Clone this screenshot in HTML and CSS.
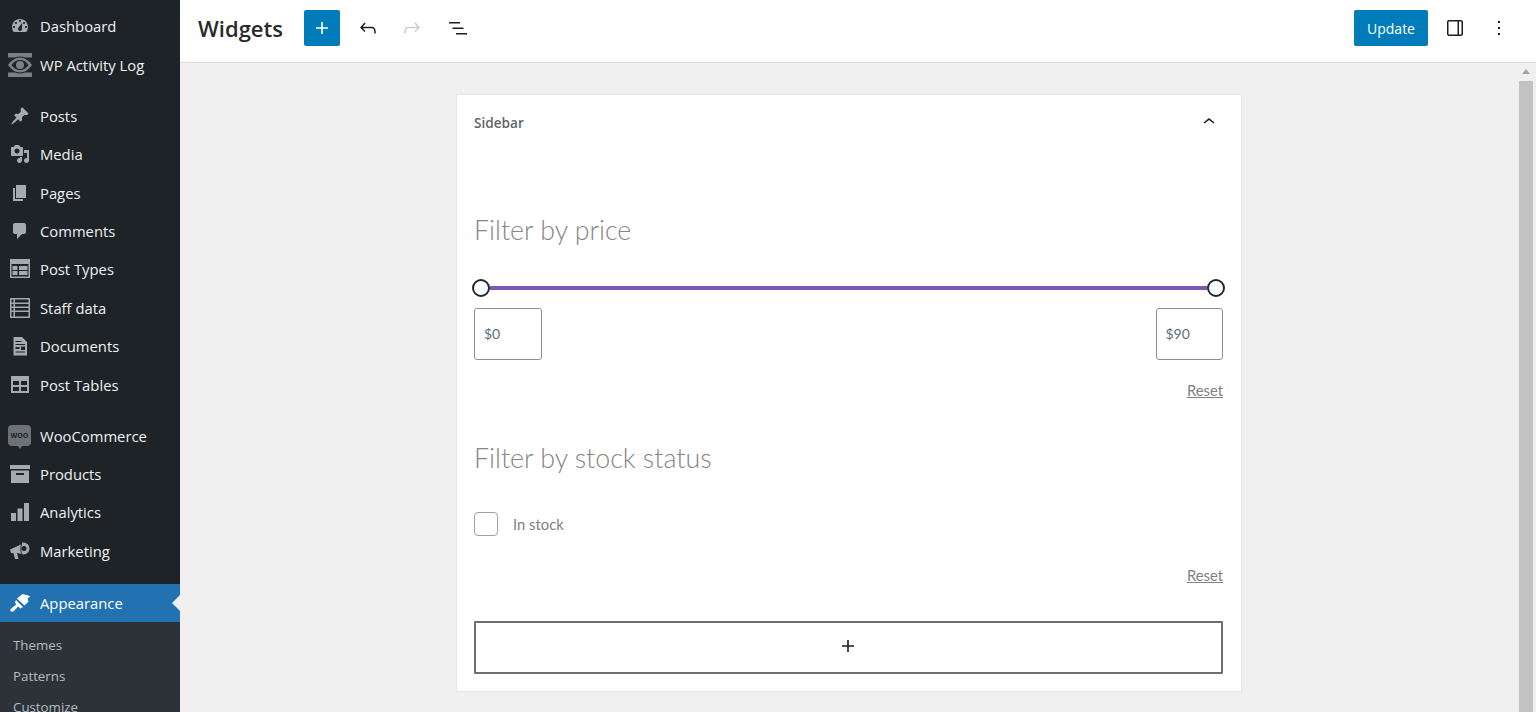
FILE: index.html
```html
<!DOCTYPE html>
<html lang="en">
<head>
<meta charset="utf-8">
<title>Widgets</title>
<link rel="stylesheet" href="styles.css">
</head>
<body>
<div class="app">
  <nav class="side">
    <ul class="group">
      <li class="item"><svg class="ic" viewBox="0 0 20 20"><path d="M3.76 16h12.48c1.100-1.370 1.760-3.110 1.760-5 0-4.420-3.580-8-8-8s-8 3.580-8 8c0 1.890.66 3.630 1.760 5zM10 4c.55 0 1 .45 1 1s-.45 1-1 1-1-.45-1-1 .45-1 1-1zM6 6c.55 0 1 .45 1 1s-.45 1-1 1-1-.45-1-1 .45-1 1-1zm8 0c.55 0 1 .45 1 1s-.45 1-1 1-1-.45-1-1 .45-1 1-1zm-5.370 5.550L12 7v6c0 1.100-.9 2-2 2s-2-.9-2-2c0-.57.24-1.080.63-1.450zM4 10c.55 0 1 .45 1 1s-.45 1-1 1-1-.45-1-1 .45-1 1-1zm12 0c.55 0 1 .45 1 1s-.45 1-1 1-1-.45-1-1 .45-1 1-1z"/></svg>Dashboard</li>
      <li class="item"><svg class="ic ic-wide" viewBox="0 0 24 24"><path class="dim" d="M0 0h24v4.500H17Q12 2.500 7 4.500H0zM0 24h24v-4.500H17Q12 21.500 7 19.500H0z"/><path class="dim" fill-rule="evenodd" d="M0 12Q5 4.500 12 4.500T24 12Q19 19.500 12 19.500T0 12zM3.500 12Q7 17 12 17t8.500-5Q17 7 12 7t-8.500 5z"/><circle class="dim" cx="12" cy="12" r="4"/></svg>WP Activity Log</li>
    </ul>
    <ul class="group">
      <li class="item"><svg class="ic" viewBox="0 0 20 20"><path d="M10.440 3.020l1.820-1.820 6.360 6.350-1.830 1.820c-1.050-.68-2.480-.57-3.410.36l-.75.75c-.92.93-1.040 2.350-.35 3.410l-1.830 1.820-2.410-2.410-2.800 2.790c-.42.42-3.380 2.710-3.800 2.290s1.860-3.390 2.280-3.810l2.790-2.790L4.100 9.360l1.830-1.820c1.050.69 2.480.57 3.400-.36l.75-.75c.93-.92 1.050-2.350.36-3.410z"/></svg>Posts</li>
      <li class="item"><svg class="ic" viewBox="0 0 20 20"><path d="M13 11V4c0-.55-.45-1-1-1h-1.670L9 1H5L3.670 3H2c-.55 0-1 .45-1 1v7c0 .55.45 1 1 1h10c.55 0 1-.45 1-1zM7 4.500c1.380 0 2.500 1.120 2.500 2.500S8.380 9.500 7 9.500 4.500 8.380 4.500 7 5.620 4.500 7 4.500zM14 6h5v10.500c0 1.380-1.120 2.500-2.500 2.500S14 17.880 14 16.500s1.120-2.500 2.500-2.500c.17 0 .34.020.5.050V9h-3V6zm-4 8.050V13h2v3.500c0 1.380-1.120 2.500-2.500 2.500S7 17.880 7 16.500 8.120 14 9.500 14c.17 0 .34.020.5.050z"/></svg>Media</li>
      <li class="item"><svg class="ic" viewBox="0 0 20 20"><path d="M6 15V2h10v13H6zm-1 1h8v2H3V5h2v11z"/></svg>Pages</li>
      <li class="item"><svg class="ic" viewBox="0 0 20 20"><path d="M5 2h9c1.100 0 2 .9 2 2v7c0 1.100-.9 2-2 2h-2l-5 5v-5H5c-1.100 0-2-.9-2-2V4c0-1.100.9-2 2-2z"/></svg>Comments</li>
      <li class="item"><svg class="ic" viewBox="0 0 20 20"><path fill-rule="evenodd" d="M0 0h20v19H0zM1.500 5v12.500h17V5zM2.500 7h5v4h-5zM2.500 12h5v4h-5zM9 7h8.500v4H9zM9 12h8.500v4H9z"/></svg>Post Types</li>
      <li class="item"><svg class="ic" viewBox="0 0 20 20"><path fill-rule="evenodd" d="M0 0h20v20H0zM1.500 1.500v3h2v-3zM1.500 6v2.500h2V6zM1.500 10v2.500h2V10zM1.500 14v4.500h2V14zM5 1.500v3h13.500v-3zM5 6v2.500h13.500V6zM5 10v2.500h13.500V10zM5 14v4.500h13.500V14z"/></svg>Staff data</li>
      <li class="item"><svg class="ic" viewBox="0 0 20 20"><path fill-rule="evenodd" d="M3.500 1H12l5 5v13.500H3.500zM5.500 5v1h6V5zM5.500 8v1h9.500V8zM5.500 11v2h4v-2zM11 10.500V14h4v-3.500zM5.500 15.500v1H15v-1z"/></svg>Documents</li>
      <li class="item"><svg class="ic" viewBox="0 0 20 20"><path fill-rule="evenodd" d="M1 1h18v17H1zM3 6v4h6V6zM11 6v4h6V6zM3 12v4h6v-4zM11 12v4h6v-4z"/></svg>Post Tables</li>
    </ul>
    <ul class="group">
      <li class="item"><span class="woo">WOO</span>WooCommerce</li>
      <li class="item"><svg class="ic" viewBox="0 0 20 20"><path fill-rule="evenodd" d="M0 1h20v4H0zM1 6.500h18V19H1zM6 9v2h8V9z"/></svg>Products</li>
      <li class="item"><svg class="ic" viewBox="0 0 20 20"><path d="M1 11h5v8H1zM7.500 6.500h5V19h-5zM14 1h5v18h-5z"/></svg>Analytics</li>
      <li class="item"><svg class="ic" viewBox="0 0 20 20"><path fill-rule="evenodd" d="M0 8.500L11 3.500Q9.500 9 11.500 13L7 12l1.500 6H5L3.500 12.300 1 12zM13.500 1.500a6 6 0 1 1 0 12 6 6 0 0 1-1-.1Q10 9 12.300 1.600zM14 5a2.500 2.500 0 1 0 0 5 2.500 2.500 0 0 0 0-5z"/></svg>Marketing</li>
    </ul>
    <ul class="group group-current">
      <li class="item current"><svg class="ic" viewBox="0 0 20 20"><path d="M7 5.500L12.500 1 20.500 3 17.500 5.500 18.500 8.500 14.500 12.500zM6 7l7 7-2.500 1.500-2.500-2-4 4.500c-1 1-3 1-3.500-.2-.4-1.200.3-2 1-2.600l4.800-3.700-1.500-2z"/></svg>Appearance</li>
    </ul>
    <ul class="submenu">
      <li>Themes</li>
      <li>Patterns</li>
      <li>Customize</li>
    </ul>
  </nav>
  <div class="work">
    <header class="bar">
      <h1 class="title">Widgets</h1>
      <button class="add" type="button"><svg viewBox="0 0 24 24"><path d="M18 11.200h-5.200V6h-1.600v5.200H6v1.600h5.200V18h1.600v-5.200H18z"/></svg></button>
      <svg class="tool undo" viewBox="0 0 24 24"><path d="M18.300 11.700c-.6-.6-1.400-.9-2.300-.9H6.700l2.900-3.300-1.100-1-4.500 5L8.500 16l1-1-2.700-2.700H16c.5 0 .9.200 1.300.5 1 1 1 3.400 1 4.500v.3h1.500v-.2c0-1.500 0-4.300-1.500-5.700z"/></svg>
      <svg class="tool redo" viewBox="0 0 24 24"><path d="M15.600 6.500l-1.100 1 2.900 3.300H8c-.9 0-1.700.3-2.300.9-1.400 1.500-1.400 4.200-1.400 5.600v.2h1.500v-.3c0-1.100 0-3.500 1-4.500.3-.3.700-.5 1.300-.5h9.200L14.500 15l1.100 1.100 4.600-4.600-4.600-5z"/></svg>
      <svg class="tool list" viewBox="0 0 24 24"><path d="M3 6h11v1.500H3V6zm3.500 5.500h11V13h-11v-1.500zM21 17H10v1.500h11V17z"/></svg>
      <button class="update" type="button">Update</button>
      <svg class="tool panel" viewBox="0 0 24 24"><path d="M18 4H6c-1.100 0-2 .9-2 2v12c0 1.100.9 2 2 2h12c1.100 0 2-.9 2-2V6c0-1.100-.9-2-2-2zM6 5.500h8.500v13H6c-.3 0-.5-.2-.5-.5V6c0-.3.2-.5.5-.5zm12.500 12.500c0 .3-.2.500-.5.500h-2v-13h2c.3 0 .5.200.5.500v12z"/></svg>
      <svg class="tool more" viewBox="0 0 24 24"><path d="M13 19h-2v-2h2v2zm0-6h-2v-2h2v2zm0-6h-2V5h2v2z"/></svg>
    </header>
    <div class="below">
      <main class="editor">
        <section class="card">
          <div class="card-head">
            <span class="card-name">Sidebar</span>
            <svg class="chev" viewBox="0 0 24 24"><path d="M6.500 12.400L12 8l5.500 4.400-.9 1.200L12 10l-4.500 3.600-1-1.200z"/></svg>
          </div>
          <h2 class="widget-title price-title">Filter by price</h2>
          <div class="slider"><span class="thumb"></span><span class="track"></span><span class="thumb"></span></div>
          <div class="prices"><div class="price">$0</div><div class="price">$90</div></div>
          <a class="reset">Reset</a>
          <h2 class="widget-title stock-title">Filter by stock status</h2>
          <label class="stock"><span class="check"></span><span class="stock-label">In stock</span></label>
          <a class="reset reset-two">Reset</a>
          <div class="appender"><svg viewBox="0 0 24 24"><path d="M18 11.200h-5.200V6h-1.600v5.200H6v1.600h5.200V18h1.600v-5.200H18z"/></svg></div>
        </section>
      </main>
      <div class="scroll"><span class="arrow"></span><span class="knob"></span></div>
    </div>
  </div>
</div>
</body>
</html>
```
FILE: styles.css
```css
* { box-sizing: border-box; }
html, body { margin: 0; height: 712px; overflow: hidden; }
body { font-family: "Open Sans", "Noto Sans", sans-serif; background: #f0f0f0; color: #1e1e1e; }
ul { list-style: none; margin: 0; padding: 0; }
.app { display: flex; height: 712px; }

.side { width: 180px; flex: none; background: #1d2327; padding-top: 7px; overflow: hidden; display: flex; flex-direction: column; }
.side > ul { flex: none; }
.group { margin-bottom: 12.800px; }
.group-current { margin: 1px 0 0; }
.item { position: relative; height: 38.400px; display: flex; align-items: center; color: #f0f0f1; font-size: 14.800px; padding-left: 10px; gap: 10px; }
.ic { width: 20px; height: 20px; fill: #a7aaad; flex: none; }
.ic-wide { width: 24px; height: 24px; margin: 0 -2px 0 -2px; }
.dim { fill: #7d8082; }
.woo { position: relative; width: 23px; height: 21px; margin: 0 -1px 0 -2px; border-radius: 4px; background: #6f7275; color: #1d2327; font-size: 7px; font-weight: 700; display: flex; align-items: center; justify-content: center; flex: none; }
.woo::after { content: ""; position: absolute; left: 10px; bottom: -3px; border: 2px solid transparent; border-top: 3px solid #6f7275; border-bottom: 0; }
.current { background: #2271b1; color: #fff; }
.current .ic { fill: #fff; }
.current::after { content: ""; position: absolute; right: 0; top: 11px; border: 8px solid transparent; border-right-color: #f0f0f1; border-left-width: 0; }
.submenu { background: #2c3338; padding-top: 7.500px; height: 200px; }
.submenu li { height: 31px; display: flex; align-items: center; padding-left: 13px; color: rgba(240, 246, 252, .7); font-size: 13.300px; }

.work { flex: 1; min-width: 0; display: flex; flex-direction: column; }
.bar { height: 63px; flex: none; background: #fff; border-bottom: 1px solid #dcdcde; display: flex; align-items: center; padding: 0 18px 6px 18px; }
.title { margin: 0; width: 106px; font-size: 22px; font-weight: 600; line-height: 1; color: #2a2a2a; }
.add { width: 36px; height: 36px; padding: 6px; border: 0; border-radius: 2px; background: #007cba; flex: none; }
.add svg { display: block; width: 24px; height: 24px; fill: #fff; }
.tool { width: 24px; height: 24px; fill: #1e1e1e; flex: none; }
.undo { margin-left: 16px; }
.redo { margin-left: 20px; fill: #ccc; }
.list { margin-left: 22px; }
.update { margin-left: auto; width: 74px; height: 36px; border: 0; border-radius: 2px; background: #007cba; color: #fff; font: 14px "Open Sans", sans-serif; padding: 0; }
.panel { margin-left: 15px; }
.more { margin-left: 20px; margin-right: 7px; }

.below { flex: 1; min-height: 0; display: flex; }
.editor { flex: 1; min-width: 0; padding-top: 31px; display: flex; justify-content: center; }
.card { width: 786px; height: 598px; background: #fff; border: 1px solid #e6e6e6; padding: 0 18px 0 17px; display: flex; flex-direction: column; }
.card-head { height: 54px; display: flex; align-items: center; justify-content: space-between; }
.card-name { font-size: 13.600px; font-weight: 600; color: #60666b; }
.chev { width: 24px; height: 24px; fill: #1e1e1e; margin-right: 2px; }
.widget-title { margin: 0; font-size: 26.800px; font-weight: 300; color: #868686; line-height: 36px; font-family: "Lato", sans-serif; }
.price-title { margin-top: 63px; }
.slider { display: flex; align-items: center; margin: 31px -2px 0; height: 18px; }
.thumb { width: 18px; height: 18px; border: 2.500px solid #23282d; border-radius: 50%; background: #fff; flex: none; }
.track { flex: 1; height: 4px; background: #7f54b3; }
.prices { display: flex; justify-content: space-between; margin-top: 11px; }
.price { width: 67.500px; height: 52px; border: 1px solid #8c8f94; border-radius: 3px; display: flex; align-items: center; padding: 0 0 2px 9px; font-size: 14px; color: #5c6d7b; font-family: "Lato", sans-serif; }
.reset { align-self: flex-end; margin-top: 21px; font-size: 14.800px; line-height: 18px; color: #808080; text-decoration: underline; font-family: "Lato", sans-serif; }
.stock-title { margin-top: 41px; }
.stock { display: flex; align-items: center; gap: 15px; margin-top: 36px; font-size: 14.800px; color: #808080; font-family: "Lato", sans-serif; }
.stock-label { margin-top: -1px; }
.check { width: 24px; height: 24px; border: 1px solid #a0a0a0; border-radius: 4px; background: #fff; }
.reset-two { margin-top: 30px; }
.appender { margin-top: 37px; height: 53px; border: 2px solid #6e6e6e; border-radius: 1px; display: flex; align-items: center; justify-content: center; }
.appender svg { width: 24px; height: 24px; fill: #1e1e1e; margin: 0 1px 3px 0; }

.scroll { width: 18px; flex: none; position: relative; display: flex; flex-direction: column; align-items: center; padding-right: 2px; }
.arrow { margin-top: 6px; border: 4px solid transparent; border-top: 0; border-bottom: 5px solid #a3a3a3; }
.knob { width: 14px; flex: 1; margin-top: 7px; background: #c2c2c2; }
```
